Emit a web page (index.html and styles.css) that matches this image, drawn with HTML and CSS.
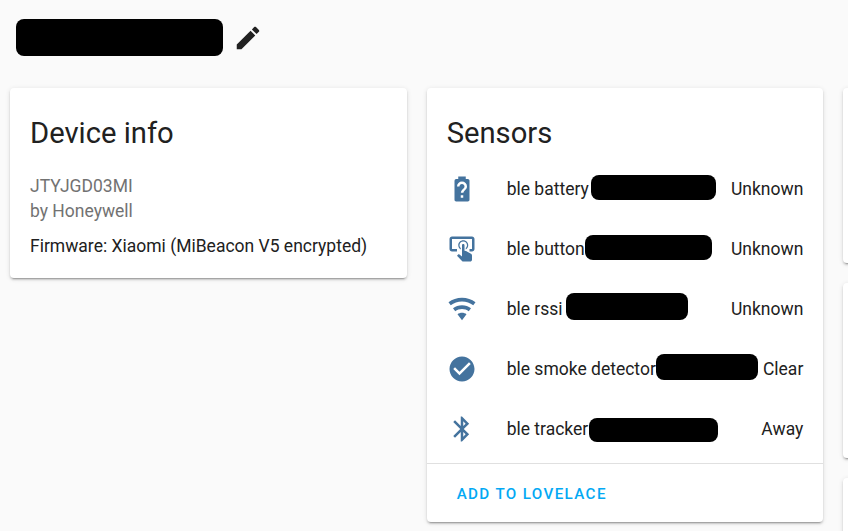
FILE: index.html
```html
<!DOCTYPE html>
<html lang="en">

<head>
    <meta charset="UTF-8">
    <meta name="viewport" content="width=device-width, initial-scale=1.0">
    <title>Device</title>
    <link rel="stylesheet" href="styles.css">
</head>

<body>
    <header class="page-header">
        <span class="redact redact-title"></span>
        <svg class="edit-icon" viewBox="0 0 24 24"><path d="M20.71,7.04C21.1,6.65 21.1,6 20.71,5.63L18.37,3.29C18,2.9 17.35,2.9 16.96,3.29L15.12,5.12L18.87,8.87M3,17.25V21H6.75L17.81,9.93L14.06,6.18L3,17.25Z"/></svg>
    </header>

    <main class="columns">
        <div class="column">
            <section class="card">
                <h2 class="card-title">Device info</h2>
                <div class="info">
                    <p class="info-model">JTYJGD03MI</p>
                    <p class="info-model">by Honeywell</p>
                    <p class="info-firmware">Firmware: Xiaomi (MiBeacon V5 encrypted)</p>
                </div>
            </section>
        </div>

        <div class="column">
            <section class="card">
                <h2 class="card-title">Sensors</h2>
                <ul class="entities">
                    <li class="entity">
                        <svg class="entity-icon" viewBox="0 0 24 24"><path d="M15.07,12.25L14.17,13.17C13.63,13.71 13.25,14.18 13.09,15H11.05C11.16,14.1 11.56,13.28 12.17,12.67L13.41,11.41C13.78,11.05 14,10.55 14,10C14,8.89 13.1,8 12,8A2,2 0 0,0 10,10H8A4,4 0 0,1 12,6A4,4 0 0,1 16,10C16,10.88 15.64,11.68 15.07,12.25M13,19H11V17H13M16.67,4H15V2H9V4H7.33A1.33,1.33 0 0,0 6,5.33V20.66C6,21.4 6.6,22 7.33,22H16.67C17.4,22 18,21.4 18,20.66V5.33C18,4.59 17.4,4 16.67,4Z"/></svg>
                        <span class="entity-name">ble battery</span>
                        <span class="redact redact-battery"></span>
                        <span class="entity-state">Unknown</span>
                    </li>
                    <li class="entity">
                        <svg class="entity-icon" viewBox="0 0 24 24"><path d="M13 5C15.21 5 17 6.79 17 9C17 10.5 16.2 11.77 15 12.46V11.24C15.61 10.69 16 9.89 16 9C16 7.34 14.66 6 13 6S10 7.34 10 9C10 9.89 10.39 10.69 11 11.24V12.46C9.8 11.77 9 10.5 9 9C9 6.79 10.79 5 13 5M20 20.5C19.97 21.32 19.32 21.97 18.5 22H13C12.62 22 12.26 21.85 12 21.57L8 17.37L8.74 16.6C8.93 16.39 9.2 16.28 9.5 16.28H9.7L12 18V9C12 8.45 12.45 8 13 8S14 8.45 14 9V13.47L15.21 13.6L19.15 15.79C19.68 16.03 20 16.56 20 17.14V20.5M20 2H4C2.9 2 2 2.9 2 4V12C2 13.11 2.9 14 4 14H8V12L4 12L4 4H20L20 12H18V14H20V13.96L20.04 14C21.13 14 22 13.09 22 12V4C22 2.9 21.11 2 20 2Z"/></svg>
                        <span class="entity-name">ble button</span>
                        <span class="redact redact-button"></span>
                        <span class="entity-state">Unknown</span>
                    </li>
                    <li class="entity">
                        <svg class="entity-icon" viewBox="0 0 24 24"><path d="M12,21L15.6,16.2C14.6,15.45 13.35,15 12,15C10.65,15 9.4,15.45 8.4,16.2L12,21M12,3C7.95,3 4.21,4.34 1.2,6.6L3,9C5.5,7.12 8.62,6 12,6C15.38,6 18.5,7.12 21,9L22.8,6.6C19.79,4.34 16.05,3 12,3M12,9C9.3,9 6.81,9.89 4.8,11.4L6.6,13.8C8.1,12.67 9.97,12 12,12C14.03,12 15.9,12.67 17.4,13.8L19.2,11.4C17.19,9.89 14.7,9 12,9Z"/></svg>
                        <span class="entity-name">ble rssi</span>
                        <span class="redact redact-rssi"></span>
                        <span class="entity-state">Unknown</span>
                    </li>
                    <li class="entity">
                        <svg class="entity-icon" viewBox="0 0 24 24"><path d="M12 2C6.5 2 2 6.5 2 12S6.5 22 12 22 22 17.5 22 12 17.5 2 12 2M10 17L5 12L6.41 10.59L10 14.17L17.59 6.58L19 8L10 17Z"/></svg>
                        <span class="entity-name">ble smoke detector</span>
                        <span class="redact redact-smoke"></span>
                        <span class="entity-state">Clear</span>
                    </li>
                    <li class="entity">
                        <svg class="entity-icon" viewBox="0 0 24 24"><path d="M14.88,16.29L13,18.17V14.41M13,5.83L14.88,7.71L13,9.58M17.71,7.71L12,2H11V9.58L6.41,5L5,6.41L10.59,12L5,17.58L6.41,19L11,14.41V22H12L17.71,16.29L13.41,12L17.71,7.71Z"/></svg>
                        <span class="entity-name">ble tracker</span>
                        <span class="redact redact-tracker"></span>
                        <span class="entity-state">Away</span>
                    </li>
                </ul>
                <div class="card-actions">
                    <a class="action-link" href="#">ADD TO LOVELACE</a>
                </div>
            </section>
        </div>

        <div class="column">
            <section class="card card-side"></section>
            <section class="card card-side"></section>
            <section class="card card-side"></section>
        </div>
    </main>
</body>

</html>
```

FILE: styles.css
```css
body, h2, p, ul {
    margin: 0;
    padding: 0;
}

body {
    font-family: Roboto, sans-serif;
    font-size: 17.5px;
    background-color: #fafafa;
    color: #212121;
    height: 531px;
    overflow: hidden;
}

/* Header */
.page-header {
    display: flex;
    align-items: center;
    height: 37px;
    padding: 19px 0 0 16px;
}

.edit-icon {
    width: 30px;
    height: 30px;
    margin-left: 10px;
    fill: #212121;
}

/* Black boxes over the hidden names */
.redact {
    flex-shrink: 0;
    display: block;
    background-color: #000;
    border-radius: 8px;
}

.redact-title {
    width: 207px;
    height: 37px;
}

.redact-battery {
    width: 125px;
    height: 25px;
    margin: 0 0 3px 2px;
}

.redact-button {
    width: 127px;
    height: 25px;
    margin: 0 0 3px 0;
}

.redact-rssi {
    width: 122px;
    height: 27px;
    margin: 0 0 5px 3px;
}

.redact-smoke {
    width: 102px;
    height: 26px;
    margin: 0 0 4px 0;
}

.redact-tracker {
    width: 129px;
    height: 24px;
    margin: 2px 0 0 1px;
}

/* Columns */
.columns {
    display: grid;
    grid-template-columns: repeat(3, 396.67px);
    column-gap: 20px;
    padding: 32px 10px 0;
}

.column {
    display: flex;
    flex-direction: column;
    align-items: stretch;
    gap: 20px;
}

.card {
    background-color: #fff;
    border-radius: 4px;
    box-shadow: 0 2px 2px 0 rgba(0, 0, 0, 0.14), 0 1px 5px 0 rgba(0, 0, 0, 0.12), 0 3px 1px -2px rgba(0, 0, 0, 0.2);
}

.card-side {
    height: 175px;
}

.card-title {
    font-size: 29.2px;
    font-weight: 400;
    line-height: 32px;
    padding: 29px 20px 10px;
}

/* Device info */
.info {
    padding: 15px 20px 19px;
    line-height: 25px;
}

.info-model {
    color: #727272;
}

.info-firmware {
    margin-top: 10px;
}

/* Sensors */
.entities {
    list-style-type: none;
    padding-bottom: 4px;
}

.entity {
    display: flex;
    align-items: center;
    height: 60px;
    padding: 0 20px;
}

.entity-icon {
    flex-shrink: 0;
    width: 30px;
    height: 30px;
    margin: 0 30px 0 0;
    fill: #44739e;
}

.entity-name {
    white-space: nowrap;
}

.entity-state {
    margin-left: auto;
}

.card-actions {
    border-top: 1px solid #e0e0e0;
    height: 56px;
    display: flex;
    align-items: center;
    padding: 2px 30px 0;
}

.action-link {
    color: #03a9f4;
    font-size: 15.2px;
    font-weight: 500;
    letter-spacing: 0.0892857em;
    text-decoration: none;
}
```
